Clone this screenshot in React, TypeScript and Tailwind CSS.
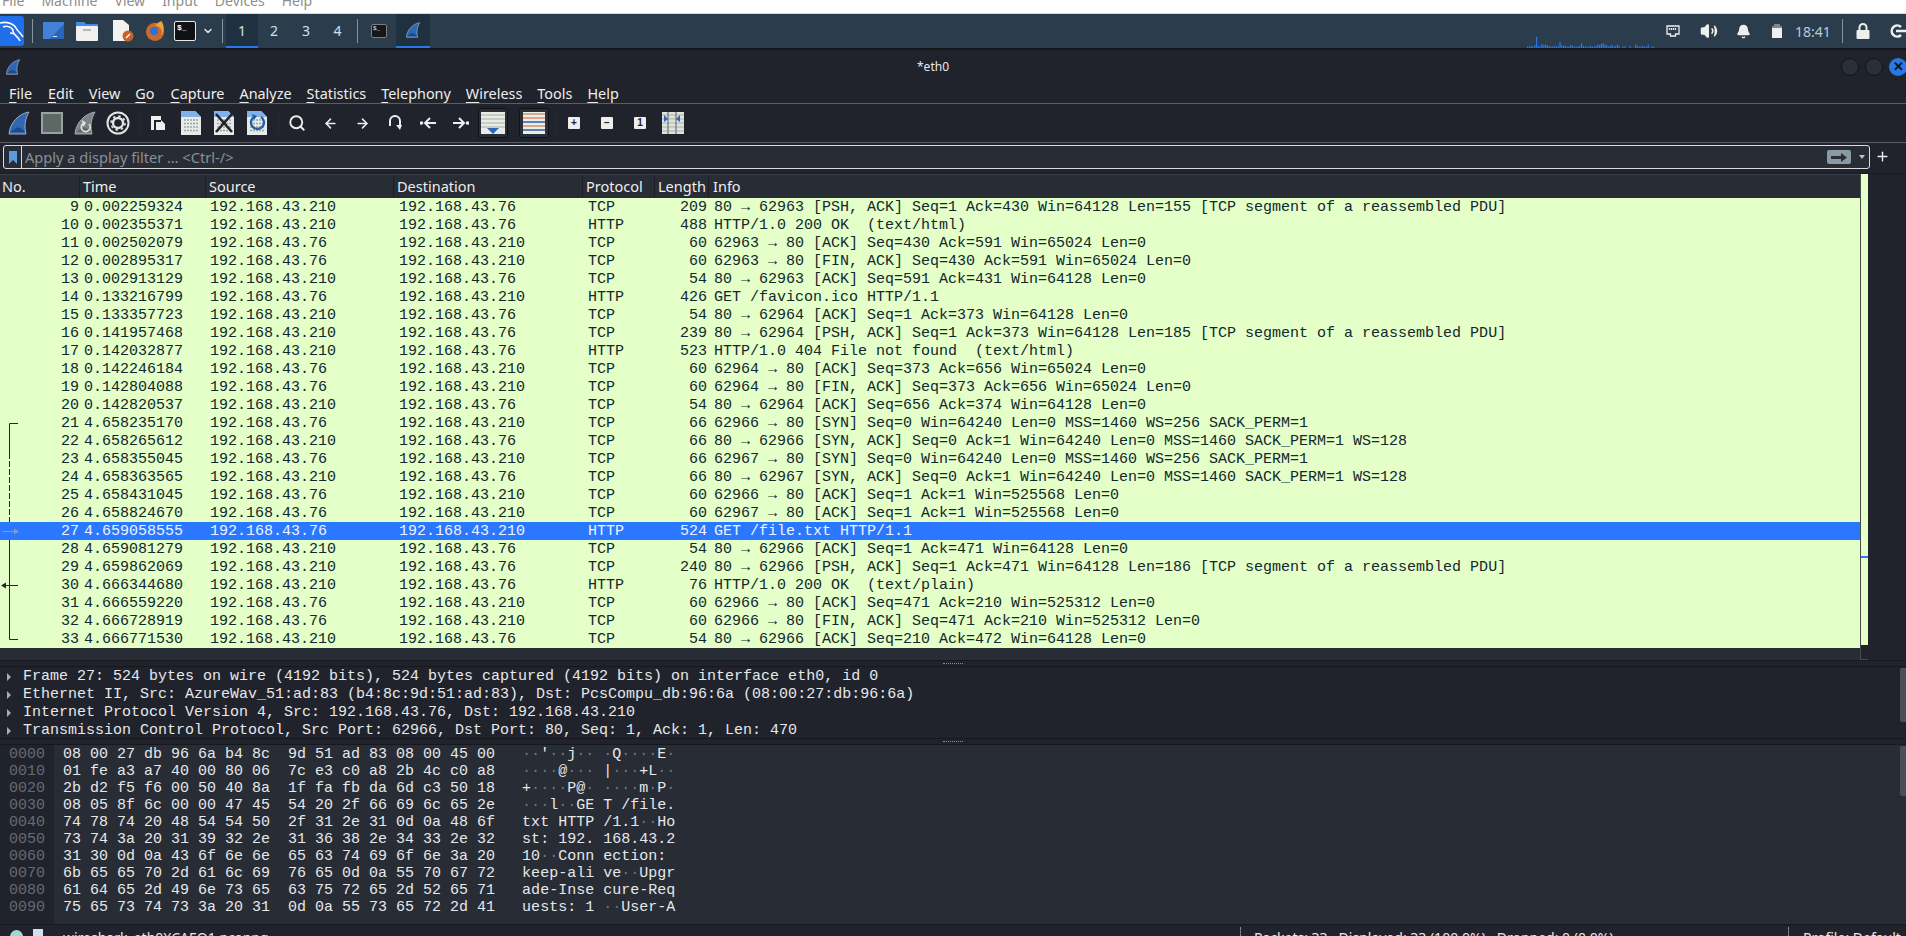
import type { ReactNode } from "react";
import { ChevronDown, Volume2, Bell, Search, ArrowLeft, ArrowRight, Plus } from "lucide-react";

const A = "192.168.43.76";
const B = "192.168.43.210";

type Pkt = [number, string, string, string, string, number, string];

const packets: Pkt[] = [
  [9, "0.002259324", B, A, "TCP", 209, "80 → 62963 [PSH, ACK] Seq=1 Ack=430 Win=64128 Len=155 [TCP segment of a reassembled PDU]"],
  [10, "0.002355371", B, A, "HTTP", 488, "HTTP/1.0 200 OK  (text/html)"],
  [11, "0.002502079", A, B, "TCP", 60, "62963 → 80 [ACK] Seq=430 Ack=591 Win=65024 Len=0"],
  [12, "0.002895317", A, B, "TCP", 60, "62963 → 80 [FIN, ACK] Seq=430 Ack=591 Win=65024 Len=0"],
  [13, "0.002913129", B, A, "TCP", 54, "80 → 62963 [ACK] Seq=591 Ack=431 Win=64128 Len=0"],
  [14, "0.133216799", A, B, "HTTP", 426, "GET /favicon.ico HTTP/1.1"],
  [15, "0.133357723", B, A, "TCP", 54, "80 → 62964 [ACK] Seq=1 Ack=373 Win=64128 Len=0"],
  [16, "0.141957468", B, A, "TCP", 239, "80 → 62964 [PSH, ACK] Seq=1 Ack=373 Win=64128 Len=185 [TCP segment of a reassembled PDU]"],
  [17, "0.142032877", B, A, "HTTP", 523, "HTTP/1.0 404 File not found  (text/html)"],
  [18, "0.142246184", A, B, "TCP", 60, "62964 → 80 [ACK] Seq=373 Ack=656 Win=65024 Len=0"],
  [19, "0.142804088", A, B, "TCP", 60, "62964 → 80 [FIN, ACK] Seq=373 Ack=656 Win=65024 Len=0"],
  [20, "0.142820537", B, A, "TCP", 54, "80 → 62964 [ACK] Seq=656 Ack=374 Win=64128 Len=0"],
  [21, "4.658235170", A, B, "TCP", 66, "62966 → 80 [SYN] Seq=0 Win=64240 Len=0 MSS=1460 WS=256 SACK_PERM=1"],
  [22, "4.658265612", B, A, "TCP", 66, "80 → 62966 [SYN, ACK] Seq=0 Ack=1 Win=64240 Len=0 MSS=1460 SACK_PERM=1 WS=128"],
  [23, "4.658355045", A, B, "TCP", 66, "62967 → 80 [SYN] Seq=0 Win=64240 Len=0 MSS=1460 WS=256 SACK_PERM=1"],
  [24, "4.658363565", B, A, "TCP", 66, "80 → 62967 [SYN, ACK] Seq=0 Ack=1 Win=64240 Len=0 MSS=1460 SACK_PERM=1 WS=128"],
  [25, "4.658431045", A, B, "TCP", 60, "62966 → 80 [ACK] Seq=1 Ack=1 Win=525568 Len=0"],
  [26, "4.658824670", A, B, "TCP", 60, "62967 → 80 [ACK] Seq=1 Ack=1 Win=525568 Len=0"],
  [27, "4.659058555", A, B, "HTTP", 524, "GET /file.txt HTTP/1.1"],
  [28, "4.659081279", B, A, "TCP", 54, "80 → 62966 [ACK] Seq=1 Ack=471 Win=64128 Len=0"],
  [29, "4.659862069", B, A, "TCP", 240, "80 → 62966 [PSH, ACK] Seq=1 Ack=471 Win=64128 Len=186 [TCP segment of a reassembled PDU]"],
  [30, "4.666344680", B, A, "HTTP", 76, "HTTP/1.0 200 OK  (text/plain)"],
  [31, "4.666559220", A, B, "TCP", 60, "62966 → 80 [ACK] Seq=471 Ack=210 Win=525312 Len=0"],
  [32, "4.666728919", A, B, "TCP", 60, "62966 → 80 [FIN, ACK] Seq=471 Ack=210 Win=525312 Len=0"],
  [33, "4.666771530", B, A, "TCP", 54, "80 → 62966 [ACK] Seq=210 Ack=472 Win=64128 Len=0"],
];

const details = [
  "Frame 27: 524 bytes on wire (4192 bits), 524 bytes captured (4192 bits) on interface eth0, id 0",
  "Ethernet II, Src: AzureWav_51:ad:83 (b4:8c:9d:51:ad:83), Dst: PcsCompu_db:96:6a (08:00:27:db:96:6a)",
  "Internet Protocol Version 4, Src: 192.168.43.76, Dst: 192.168.43.210",
  "Transmission Control Protocol, Src Port: 62966, Dst Port: 80, Seq: 1, Ack: 1, Len: 470",
];

const hex: [string, string, string][] = [
  ["0000", "08 00 27 db 96 6a b4 8c  9d 51 ad 83 08 00 45 00", "··'··j·· ·Q····E·"],
  ["0010", "01 fe a3 a7 40 00 80 06  7c e3 c0 a8 2b 4c c0 a8", "····@··· |···+L··"],
  ["0020", "2b d2 f5 f6 00 50 40 8a  1f fa fb da 6d c3 50 18", "+····P@· ····m·P·"],
  ["0030", "08 05 8f 6c 00 00 47 45  54 20 2f 66 69 6c 65 2e", "···l··GE T /file."],
  ["0040", "74 78 74 20 48 54 54 50  2f 31 2e 31 0d 0a 48 6f", "txt HTTP /1.1··Ho"],
  ["0050", "73 74 3a 20 31 39 32 2e  31 36 38 2e 34 33 2e 32", "st: 192. 168.43.2"],
  ["0060", "31 30 0d 0a 43 6f 6e 6e  65 63 74 69 6f 6e 3a 20", "10··Conn ection: "],
  ["0070", "6b 65 65 70 2d 61 6c 69  76 65 0d 0a 55 70 67 72", "keep-ali ve··Upgr"],
  ["0080", "61 64 65 2d 49 6e 73 65  63 75 72 65 2d 52 65 71", "ade-Inse cure-Req"],
  ["0090", "75 65 73 74 73 3a 20 31  0d 0a 55 73 65 72 2d 41", "uests: 1 ··User-A"],
];

const graph = [2,2,3,2,4,16,3,3,6,4,5,4,3,2,2,3,2,3,9,4,3,3,2,2,4,3,2,2,2,3,7,3,2,2,2,3,2,2,3,5,4,6,7,5,4,2,3,4,2,3,5,2,0,2,2,0,0,3,0,0,5,3,2,2,3,2,2,5,0,2,2];

function Fin({ className = "", grey = false }: { className?: string; grey?: boolean }) {
  return (
    <svg viewBox="0 0 22 24" className={className}>
      <path d="M1 23 C2 12 10 3 21 1 C17 8 16 15 18 23 Z" fill={grey ? "#7d8384" : "#2f66b5"} stroke="#a3adb4" strokeWidth="1" />
      <path d="M3 21 C8 15 12 15 17 21 Z" fill={grey ? "#5f6566" : "#1d4a8f"} />
      {grey && (
        <g fill="none" stroke="#dfe3e3" strokeWidth="1.6">
          <path d="M15 13 A4.5 4.5 0 1 1 10 12" />
          <path d="M8 10 L11 12 L9 15" />
        </g>
      )}
    </svg>
  );
}

function DocIcon({ children }: { children?: ReactNode }) {
  return (
    <svg viewBox="0 0 20 24" className="w-[20px] h-[24px]">
      <path d="M0 0 H14 L20 6 V24 H0 Z" fill="#e6eaea" />
      <path d="M0 0 H14 L20 6 H0 Z" fill="#7fb2e8" />
      <path d="M3 9 h14 M3 12.5 h14 M3 16 h14 M3 19.5 h14" stroke="#9ea8a4" strokeWidth="1.6" strokeDasharray="2 1" />
      {children}
    </svg>
  );
}

function Menu({ m, rest }: { m: string; rest: string }) {
  return (
    <span>
      <span className="underline underline-offset-[3px] decoration-1">{m}</span>
      {rest}
    </span>
  );
}

function KaliPanel() {
  return (
    <div className="h-[34px] bg-[#2b3d4d] flex items-stretch relative shrink-0">
      <div className="w-[24px] h-[30px] mt-[2px] bg-[#1f6fe8] rounded-r-[3px] flex items-center justify-center">
        <svg viewBox="0 0 24 24" className="w-[24px] h-[24px]" fill="none" stroke="#fff" strokeWidth="1.6">
          <path d="M0 4 C7 2 14 5 16 9 C18 13 21 14 23 18 M3 8 C8 6 13 9 13 12 C13 16 17 16 20 22 M10 14 C12 14 13 14 14 15" />
        </svg>
      </div>
      <div className="w-px h-[24px] bg-[#8a949c] self-center ml-[8px]" />
      <div className="flex items-center ml-[9px]">
        <svg viewBox="0 0 22 18" className="w-[22px] h-[18px]">
          <path d="M1 0 H22 V17 H1 Z" fill="#2a64b8" />
          <path d="M1 0 H22 L22 2 L8 17 H1 Z" fill="#3f82d8" />
          <rect x="11" y="14" width="4" height="1" fill="#dce6f0" />
        </svg>
        <svg viewBox="0 0 22 20" className="w-[22px] h-[20px] ml-[12px]">
          <path d="M0 1 H8 L10 3 H22 V7 H0 Z" fill="#3f8de8" />
          <rect x="0" y="5" width="22" height="15" rx="1" fill="#f0f0ee" />
          <rect x="7" y="8" width="8" height="2" fill="#b8b8b8" />
        </svg>
        <svg viewBox="0 0 22 22" className="w-[22px] h-[22px] ml-[14px]">
          <path d="M1 0 H11 L17 5 V21 H1 Z" fill="#f2f2f0" />
          <circle cx="16" cy="16" r="5.5" fill="#c4622a" />
          <path d="M14 18 L18 14" stroke="#fff" strokeWidth="1.5" />
        </svg>
        <svg viewBox="0 0 22 22" className="w-[20px] h-[22px] ml-[11px]">
          <circle cx="11" cy="12" r="10" fill="#c9692b" />
          <path d="M11 5 C15 1 16 1 18 0 C22 6 21 12 18 16 C20 9 16 6 11 5 Z" fill="#e8a33a" />
          <circle cx="10" cy="11" r="4.5" fill="#2f6fd8" />
        </svg>
        <div className="w-[22px] h-[20px] ml-[9px] bg-[#101114] border border-[#e8e8e8] rounded-[2px] text-white text-[8px] leading-[12px] pl-[2px] font-['Liberation_Mono',monospace] font-bold">
          $_
        </div>
        <ChevronDown className="w-[12px] h-[12px] ml-[6px] text-[#e6e6e6]" strokeWidth={3} />
      </div>
      <div className="w-px h-[24px] bg-[#8a949c] self-center ml-[8px]" />
      <div className="flex ml-[3px] font-['Noto_Sans',sans-serif] text-[14px] text-[#cfe0ee]">
        <div className="w-[32px] flex items-center justify-center bg-[#1f3040] border-b-2 border-[#2a78e8]">1</div>
        <div className="w-[32px] flex items-center justify-center border-b-2 border-transparent">2</div>
        <div className="w-[32px] flex items-center justify-center border-b-2 border-transparent">3</div>
        <div className="w-[31px] flex items-center justify-center border-b-2 border-transparent">4</div>
      </div>
      <div className="w-px h-[24px] bg-[#8a949c] self-center ml-[4px]" />
      <div className="w-[16px] h-[14px] self-center ml-[13px] bg-[#14161a] border border-[#7a7f84] rounded-[2px] text-white text-[6px] leading-[7px] pl-px font-['Liberation_Mono',monospace]">
        $_
      </div>
      <div className="w-[34px] ml-[9px] flex items-center justify-center bg-[#1f3040] border-b-2 border-[#2a78e8]">
        <Fin className="w-[16px] h-[16px]" />
      </div>

      <svg viewBox="0 0 128 12" className="w-[128px] h-[12px] absolute left-[1527px] bottom-0">
        {graph.map((h, i) => (
          <rect key={i} x={i * 1.8} y={12 - h * 0.7} width="1.2" height={h * 0.7} fill="#2a78e8" />
        ))}
      </svg>

      <div className="ml-auto flex items-center text-[#eeeeec]">
        <svg viewBox="0 0 14 12" className="w-[14px] h-[12px] mr-[20px]" fill="none" stroke="#eeeeec" strokeWidth="1.3">
          <path d="M1 1 H13 V9 H9.5 V11 H4.5 V9 H1 Z" />
          <path d="M3.5 3 V5 M5.5 3 V5 M7.5 3 V5 M9.5 3 V5" />
        </svg>
        <Volume2 className="w-[18px] h-[18px] mr-[18px]" fill="#eeeeec" />
        <Bell className="w-[15px] h-[15px] mr-[21px]" fill="#eeeeec" />
        <div className="w-[10px] h-[14px] mr-[13px] flex flex-col items-center">
          <div className="w-[6px] h-[2px] bg-[#778892]" />
          <div className="w-[10px] h-[2px] bg-[#778892]" />
          <div className="w-[10px] h-[10px] bg-[#eeeeec]" />
        </div>
        <span className="font-['Noto_Sans',sans-serif] text-[14px] text-[#b6cbdc] w-[47px]">18:41</span>
        <div className="w-px h-[24px] bg-[#8a949c] mr-[13px]" />
        <svg viewBox="0 0 14 16" className="w-[14px] h-[16px] mr-[20px]">
          <path d="M3.5 8 V4.5 A3.5 3.5 0 0 1 10.5 4.5 V8" fill="none" stroke="#eeeeec" strokeWidth="2" />
          <rect x="0.5" y="7" width="13" height="9" rx="1" fill="#eeeeec" />
        </svg>
        <svg viewBox="0 0 16 14" className="w-[16px] h-[14px]" fill="none" stroke="#eeeeec" strokeWidth="2.6">
          <path d="M11 3 A5.5 5.5 0 1 0 11 11 M6 7 H16" />
        </svg>
      </div>
    </div>
  );
}

function Toolbar() {
  return (
    <div className="h-[39px] flex items-center border-b border-[#5a5e64] shrink-0">
      <Fin className="ml-[8px] w-[22px] h-[24px]" />
      <div className="ml-[11px] w-[22px] h-[22px] bg-[#5d6766] border-2 border-[#9aa19f]" />
      <Fin grey className="ml-[11px] w-[22px] h-[24px]" />
      <svg viewBox="0 0 24 24" className="ml-[10px] w-[24px] h-[24px]" fill="none" stroke="#e4e4e4">
        <circle cx="12" cy="12" r="10.5" strokeWidth="2" />
        <circle cx="12" cy="12" r="5" strokeWidth="2.4" />
        <circle cx="12" cy="12" r="7" strokeWidth="1.6" strokeDasharray="2.5 3" />
      </svg>
      <div className="ml-[9px] w-px h-[24px] bg-[#262a32]" />
      <svg viewBox="0 0 16 16" className="ml-[10px] w-[16px] h-[16px]">
        <path d="M1 1 H11 V5 H4 V15 H1 Z" fill="#f0f0f0" />
        <path d="M6 7 H11 V5 L15 9 V15 H6 Z" fill="#f0f0f0" />
      </svg>
      <div className="ml-[15px]"><DocIcon /></div>
      <div className="ml-[13px]">
        <DocIcon>
          <path d="M2 3 L18 21 M18 3 L2 21" stroke="#222" strokeWidth="2.6" />
        </DocIcon>
      </div>
      <div className="ml-[13px]">
        <DocIcon>
          <path d="M14 6 A6.5 6.5 0 1 1 7 6" fill="none" stroke="#2560ad" strokeWidth="2.4" />
          <path d="M5 3 L10 5 L7 9 Z" fill="#2560ad" />
        </DocIcon>
      </div>
      <div className="ml-[11px] w-px h-[24px] bg-[#262a32]" />
      <Search className="ml-[9px] w-[18px] h-[18px] text-[#eee]" strokeWidth={2.5} />
      <ArrowLeft className="ml-[17px] w-[15px] h-[15px] text-[#eee]" strokeWidth={2.5} />
      <ArrowRight className="ml-[17px] w-[15px] h-[15px] text-[#eee]" strokeWidth={2.5} />
      <svg viewBox="0 0 14 16" className="ml-[18px] w-[14px] h-[16px]" fill="none" stroke="#eee" strokeWidth="2">
        <path d="M2 11 V6 A5 5 0 0 1 12 6 V12" />
        <path d="M8 10 L12 15 L14 10" fill="#eee" stroke="none" />
      </svg>
      <svg viewBox="0 0 16 12" className="ml-[18px] w-[16px] h-[12px]" fill="none" stroke="#eee" strokeWidth="2">
        <circle cx="1.5" cy="6" r="1.8" fill="#eee" stroke="none" />
        <path d="M16 6 H6 M10 1 L5 6 L10 11" />
      </svg>
      <svg viewBox="0 0 16 12" className="ml-[17px] w-[16px] h-[12px]" fill="none" stroke="#eee" strokeWidth="2">
        <circle cx="14.5" cy="6" r="1.8" fill="#eee" stroke="none" />
        <path d="M0 6 H10 M6 1 L11 6 L6 11" />
      </svg>
      <div className="ml-[9px] w-[30px] h-[30px] rounded-[3px] border border-[#101218] bg-[#2a2e36] flex items-center justify-center">
        <svg viewBox="0 0 24 22" className="w-[24px] h-[22px]">
          <rect width="24" height="22" fill="#e8ebe6" />
          <path d="M0 3 H24 M0 7 H24 M0 11 H24 M0 15 H24" stroke="#a9afa8" />
          <path d="M6 16 H18 L12 22 Z" fill="#2f66b5" />
        </svg>
      </div>
      <div className="ml-[11px] w-[30px] h-[30px] rounded-[3px] border border-[#101218] bg-[#2a2e36] flex items-center justify-center">
        <svg viewBox="0 0 22 22" className="w-[22px] h-[22px]">
          <rect width="22" height="22" fill="#eceeea" />
          <path d="M0 2 H22 M0 6 H22 M0 14 H22" stroke="#c8622c" strokeWidth="1" />
          <path d="M0 10 H22 M0 18 H22" stroke="#2f5fa8" strokeWidth="1.4" />
        </svg>
      </div>
      <div className="ml-[7px] w-px h-[24px] bg-[#262a32]" />
      {["+", "−", "1"].map((t, i) => (
        <div
          key={t}
          className={`${i === 0 ? "ml-[11px]" : "ml-[21px]"} w-[12px] h-[12px] bg-[#eee] rounded-[1px] flex items-center justify-center text-[#222] text-[10px] leading-none font-bold font-['Liberation_Sans',sans-serif]`}
        >
          {t}
        </div>
      ))}
      <svg viewBox="0 0 22 22" className="ml-[16px] w-[22px] h-[22px]">
        <rect width="22" height="22" fill="#dfe3de" />
        <path d="M0 3 H22 M0 7 H22 M0 11 H22 M0 15 H22 M0 19 H22" stroke="#a9afa8" />
        <path d="M6 0 V22 M14 0 V22" stroke="#7d8384" strokeWidth="1.4" />
        <path d="M2 3 L6 7 L2 10 Z M18 3 L14 7 L18 10 Z" fill="#2f66b5" />
      </svg>
    </div>
  );
}

function FilterBar() {
  return (
    <div className="h-[31px] flex items-start pt-[2px] border-b border-[#1a1c22] bg-[#20232c] shrink-0 relative">
      <div className="ml-[3px] w-[1867px] h-[24px] bg-[#282c35] border border-[#dcdcdc] rounded-[3px] flex items-center font-['Noto_Sans',sans-serif]">
        <div className="w-[18px] h-full flex items-center justify-center border-r border-[#dcdcdc]">
          <svg viewBox="0 0 8 13" className="w-[8px] h-[13px]">
            <path d="M0 0 H8 V13 L4 9 L0 13 Z" fill="#5b9be0" />
          </svg>
        </div>
        <span className="ml-[3px] pt-[2px] text-[14.6px] text-[#8a8f96]">Apply a display filter … &lt;Ctrl-/&gt;</span>
        <div className="ml-auto w-[24px] h-[14px] bg-[#8a9aa2] rounded-[2px] flex items-center justify-center">
          <svg viewBox="0 0 16 9" className="w-[16px] h-[9px]">
            <path d="M0 3 H10 V0 L16 4.5 L10 9 V6 H0 Z" fill="#2a2e36" />
          </svg>
        </div>
        <svg viewBox="0 0 6 4" className="ml-[8px] mr-[4px] w-[6px] h-[4px]">
          <path d="M0 0 H6 L3 4 Z" fill="#c4c4c4" />
        </svg>
      </div>
      <Plus className="ml-[5px] mt-[4px] w-[15px] h-[15px] text-[#f0f0f0]" strokeWidth={2.2} />
    </div>
  );
}

function PacketList() {
  const head = "h-full flex items-center border-r border-[#1c1f26] pl-[3px]";
  return (
    <div className="h-[487px] flex shrink-0 border-b border-[#16181d]">
      <div className="w-[1860px] flex flex-col">
        <div className="h-[24px] flex bg-[#282c35] border-t border-[#3a3e46] text-[14.5px] text-[#eeeeec] font-['Noto_Sans',sans-serif] shrink-0">
          <div className="w-[80px] pl-[2px] h-full flex items-center border-r border-[#1c1f26]">No.</div>
          <div className={`w-[126px] ${head}`}>Time</div>
          <div className={`w-[188px] ${head}`}>Source</div>
          <div className={`w-[189px] ${head}`}>Destination</div>
          <div className={`w-[72px] ${head}`}>Protocol</div>
          <div className={`w-[54px] ${head}`}>Length</div>
          <div className="flex-1 h-full flex items-center pl-[4px]">Info</div>
        </div>
        <div className="relative h-[450px] shrink-0 font-['Liberation_Mono',monospace] text-[15px] leading-[18px] whitespace-pre">
          {packets.map((p) => {
            const sel = p[0] === 27;
            return (
              <div key={p[0]} className={`h-[18px] pt-px flex ${sel ? "bg-[#2a78ff] text-[#eef3ff]" : "bg-[#e4ffc7] text-[#12272e]"}`}>
                <div className="w-[79px] text-right">{p[0]}</div>
                <div className="w-[131px] pl-[5px]">{p[1]}</div>
                <div className="w-[189px]">{p[2]}</div>
                <div className="w-[189px]">{p[3]}</div>
                <div className="w-[71px]">{p[4]}</div>
                <div className="w-[48px] text-right">{p[5]}</div>
                <div className="pl-[7px]">{p[6]}</div>
              </div>
            );
          })}
          <svg viewBox="0 0 20 450" className="absolute left-0 top-0 w-[20px] h-[450px]" fill="none" stroke="#1c2a30">
            <path d="M18 225.5 H9.5 V255" />
            <path d="M9.5 255 V324" strokeDasharray="6 2" />
            <path d="M9.5 342 V441.5 H18" />
            <path d="M2 333.5 H15" stroke="#8f98a8" />
            <path d="M14 330.5 L19 333.5 L14 336.5 Z" fill="#8f98a8" stroke="none" />
            <path d="M4 387.5 H18" />
            <path d="M1 387.5 L6 384.5 V390.5 Z" fill="#1c2a30" stroke="none" />
          </svg>
        </div>
        <div className="flex-1 bg-[#282c35]" />
      </div>
      <div className="w-[8px] border-l border-[#4a4b4d] border-b bg-[#20232c] flex flex-col">
        <div className="h-[382px] bg-[#e4ffc7]" />
        <div className="h-[2px] bg-[#2a78ff]" />
        <div className="h-[87px] bg-[#e4ffc7]" />
      </div>
    </div>
  );
}

function Grip() {
  return (
    <div className="h-[5px] flex justify-center items-center gap-px shrink-0 bg-[#20232c]">
      <div className="w-[20px] h-px border-t border-dotted border-[#8a8f96]" />
    </div>
  );
}

// non-printable bytes are dimmed in the ascii column
function Ascii({ text }: { text: string }) {
  return (
    <>
      {text.split("").map((c, i) => (
        <span key={i} className={c === "·" ? "text-[#6f757c]" : undefined}>{c}</span>
      ))}
    </>
  );
}

export default function App() {
  const mono = "font-['Liberation_Mono',monospace] text-[15px] whitespace-pre";
  return (
    <div className="w-[1906px] h-[936px] overflow-hidden flex flex-col bg-[#20232c]">
      <div className="h-[14px] bg-white border-b border-[#d8d8d8] overflow-hidden shrink-0">
        <div className="flex -mt-[9px] pl-[2px] gap-[17px] text-[14px] leading-[20px] text-[#8e8e8e] font-['Noto_Sans',sans-serif]">
          <span>File</span>
          <span>Machine</span>
          <span>View</span>
          <span>Input</span>
          <span>Devices</span>
          <span>Help</span>
        </div>
      </div>
      <KaliPanel />
      <div className="h-[2px] bg-[#14161a] shrink-0" />

      <div className="h-[34px] flex items-center relative shrink-0 bg-[#20232c]">
        <Fin className="ml-[5px] w-[16px] h-[16px]" />
        <span className="absolute left-[917px] text-[12px] text-[#e8e8e8] font-['Noto_Sans',sans-serif]">*eth0</span>
        <div className="ml-auto flex gap-[6px] -mr-px items-center">
          <div className="w-[18px] h-[18px] rounded-full bg-[#2a3038] border border-[#12141a]" />
          <div className="w-[18px] h-[18px] rounded-full bg-[#2a3038] border border-[#12141a]" />
          <div className="w-[18px] h-[18px] rounded-full bg-[#2a78e8] flex items-center justify-center text-[#101218] text-[13px] font-bold font-['Liberation_Sans',sans-serif]">✕</div>
        </div>
      </div>

      <div className="h-[20px] flex items-center pl-[9px] gap-[15px] text-[14.4px] text-[#eeeeec] font-['Noto_Sans',sans-serif] border-b border-[#5a5e64] shrink-0">
        <Menu m="F" rest="ile" />
        <div className="ml-px"><Menu m="E" rest="dit" /></div>
        <Menu m="V" rest="iew" />
        <Menu m="G" rest="o" />
        <div className="ml-px"><Menu m="C" rest="apture" /></div>
        <Menu m="A" rest="nalyze" />
        <Menu m="S" rest="tatistics" />
        <Menu m="T" rest="elephony" />
        <Menu m="W" rest="ireless" />
        <Menu m="T" rest="ools" />
        <Menu m="H" rest="elp" />
      </div>

      <Toolbar />
      <FilterBar />
      <PacketList />
      <Grip />

      <div className="h-[73px] border-y border-[#16181d] flex shrink-0 overflow-hidden relative">
        <div className="flex-1 pt-px overflow-hidden">
          {details.map((d) => (
            <div key={d} className="h-[18px] flex items-center text-[#e6e8ea]">
              <svg viewBox="0 0 4 8" className="ml-[7px] w-[4px] h-[8px] shrink-0">
                <path d="M0 0 L4 4 L0 8 Z" fill="#a8adb2" />
              </svg>
              <div className={`ml-[12px] leading-[18px] ${mono}`}>{d}</div>
            </div>
          ))}
        </div>
        <div className="w-[6px] h-[54px] mt-px bg-[#4a4e55] rounded-l-[2px]" />
      </div>
      <Grip />

      <div className="h-[180px] flex bg-[#282c35] border-t border-[#16181d] shrink-0 overflow-hidden">
        <div className="w-[54px] shrink-0 bg-[#20232c] pt-[1px]">
          {hex.map((h) => (
            <div key={h[0]} className={`h-[17px] leading-[17px] pl-[9px] text-[#666b72] ${mono}`}>{h[0]}</div>
          ))}
        </div>
        <div className="flex-1 pl-[9px] pt-[1px] overflow-hidden">
          {hex.map((h) => (
            <div key={h[0]} className={`h-[17px] leading-[17px] text-[#e6e8ea] ${mono}`}>
              {h[1]}{"   "}<Ascii text={h[2]} />
            </div>
          ))}
        </div>
        <div className="w-[6px] h-[50px] mt-px bg-[#4a4e55] rounded-l-[2px]" />
      </div>

      <div className="flex-1 flex items-start border-t border-[#16181d] overflow-hidden text-[14px] leading-[18px] text-[#e6e8ea] font-['Noto_Sans',sans-serif]">
        <div className="ml-[10px] mt-[5px] w-[13px] h-[13px] rounded-full bg-[#9fd8d0] shrink-0" />
        <div className="ml-[10px] mt-[4px] w-[10px] h-[12px] bg-[#cfe0ee] shrink-0" />
        <span className="ml-[20px] mt-[4px] w-[1177px] shrink-0">wireshark_eth0XCAEQ1.pcapng</span>
        <div className="mt-[2px] h-[10px] border-l border-dashed border-[#8a8f96] shrink-0" />
        <span className="ml-[13px] mt-[4px] w-[534px] shrink-0">Packets: 33 · Displayed: 33 (100.0%) · Dropped: 0 (0.0%)</span>
        <div className="mt-[2px] h-[10px] border-l border-dashed border-[#8a8f96] shrink-0" />
        <span className="ml-[14px] mt-[4px] shrink-0">Profile: Default</span>
      </div>
    </div>
  );
}
